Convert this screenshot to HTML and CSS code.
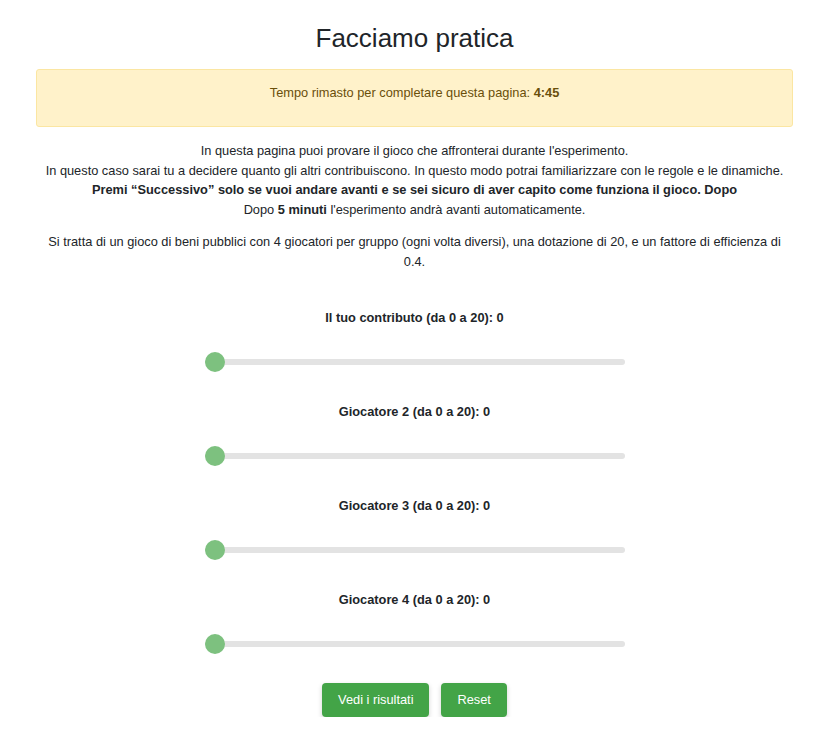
FILE: index.html
```html
<!DOCTYPE html>
<html lang="it">
<head>
<meta charset="utf-8">
<title>Facciamo pratica</title>
<link rel="stylesheet" href="styles.css">
</head>
<body>
<div class="page">
  <h1 class="title">Facciamo pratica</h1>
  <div class="alert">Tempo rimasto per completare questa pagina: <b>4:45</b></div>
  <div class="intro">
    <p>In questa pagina puoi provare il gioco che affronterai durante l'esperimento.<br>
    In questo caso sarai tu a decidere quanto gli altri contribuiscono. In questo modo potrai familiarizzare con le regole e le dinamiche.<br>
    <b>Premi “Successivo” solo se vuoi andare avanti e se sei sicuro di aver capito come funziona il gioco. Dopo</b><br>
    Dopo <b>5 minuti</b> l'esperimento andrà avanti automaticamente.</p>
    <p>Si tratta di un gioco di beni pubblici con 4 giocatori per gruppo (ogni volta diversi), una dotazione di 20, e un fattore di efficienza di 0.4.</p>
  </div>
  <div class="sliders">
    <div class="field">
      <label class="label">Il tuo contributo (da 0 a 20): 0</label>
      <input class="range" type="range" min="0" max="20" value="0">
    </div>
    <div class="field">
      <label class="label">Giocatore 2 (da 0 a 20): 0</label>
      <input class="range" type="range" min="0" max="20" value="0">
    </div>
    <div class="field">
      <label class="label">Giocatore 3 (da 0 a 20): 0</label>
      <input class="range" type="range" min="0" max="20" value="0">
    </div>
    <div class="field">
      <label class="label">Giocatore 4 (da 0 a 20): 0</label>
      <input class="range" type="range" min="0" max="20" value="0">
    </div>
  </div>
  <div class="actions">
    <button class="btn">Vedi i risultati</button>
    <button class="btn">Reset</button>
  </div>
</div>
</body>
</html>
```
FILE: styles.css
```css
html, body {
  margin: 0;
  padding: 0;
  background: #fff;
}
body {
  font-family: "Liberation Sans", Arial, sans-serif;
  color: #212529;
  font-size: 12.8px;
}
.page {
  padding: 0 25px 0 36px;
}
.title {
  margin: 0 0 15px;
  padding-top: 22px;
  font-size: 26px;
  font-weight: 400;
  line-height: 32px;
  text-align: center;
}
.alert {
  box-sizing: border-box;
  height: 58px;
  padding-top: 15px;
  background: #fff2ca;
  border: 1px solid #fbe6a2;
  border-radius: 3px;
  color: #6a4f0b;
  text-align: center;
  line-height: 15px;
}
.intro {
  margin-top: 14px;
  text-align: center;
  line-height: 19.7px;
}
.intro p {
  margin: 0 0 12.5px;
}
.sliders {
  margin-top: 38px;
  display: flex;
  flex-direction: column;
  align-items: center;
}
.field {
  display: flex;
  flex-direction: column;
  align-items: center;
  height: 94px;
}
.label {
  font-weight: 700;
  line-height: 16px;
}
.range {
  -webkit-appearance: none;
  appearance: none;
  width: 420px;
  height: 20px;
  margin: 26px 0 0;
  background: transparent;
  outline: none;
}
.range::-webkit-slider-runnable-track {
  height: 6px;
  background: #e3e3e3;
  border-radius: 3px;
}
.range::-webkit-slider-thumb {
  -webkit-appearance: none;
  width: 20px;
  height: 20px;
  margin-top: -7px;
  border-radius: 50%;
  background: #7dc17f;
  border: none;
}
.actions {
  margin-top: -3px;
  display: flex;
  justify-content: center;
  gap: 12px;
}
.btn {
  font-family: "Liberation Sans", Arial, sans-serif;
  font-size: 12.8px;
  color: #fff;
  background: #43a447;
  border: none;
  border-radius: 4px;
  height: 34px;
  padding: 0 16px;
  box-shadow: 0 2px 5px rgba(0,0,0,0.18);
}
```
